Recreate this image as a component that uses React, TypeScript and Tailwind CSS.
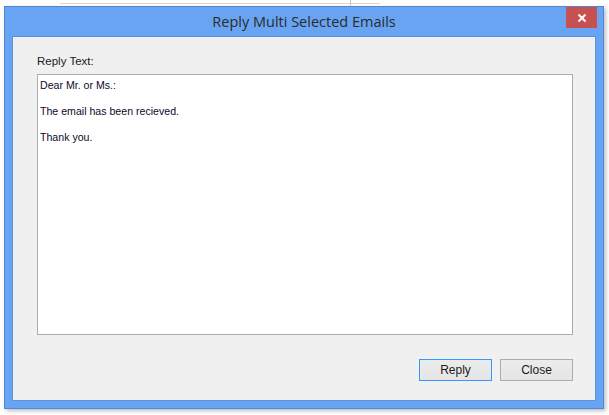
export default function App() {
  return (
    <div className="relative h-[415px] w-[609px] overflow-hidden bg-white font-['Liberation_Sans',Arial,sans-serif]">
      {/* faint app behind the dialog */}
      <div className="absolute left-[60px] top-0 h-[4px] w-[320px] border-b border-[#d8d8d8]" />
      <div className="absolute left-[350px] top-0 h-[6px] w-px bg-[#c8c8c8]" />

      <div className="pl-[4px] pt-[6px]">
        <div className="flex h-[403px] w-[600px] flex-col border border-[#4f88d4] bg-[#68a4f2] shadow-[2px_2px_4px_rgba(0,0,0,0.25)]">
          {/* title bar */}
          <div className="relative flex h-[29px] shrink-0 items-center justify-center pt-[1px]">
            <span className="font-['Open_Sans',sans-serif] text-[14.5px] text-[#2b2b2b]">
              Reply Multi Selected Emails
            </span>
            <button className="absolute right-[6px] top-0 flex h-[21px] w-[31px] items-center justify-center bg-[#c75050]">
              <svg width="10" height="10" viewBox="0 0 10 10">
                <path d="M1.5 1.5 L8.5 8.5 M8.5 1.5 L1.5 8.5" stroke="white" strokeWidth="2" />
              </svg>
            </button>
          </div>

          {/* client area */}
          <div className="mx-[7px] mb-[7px] flex flex-1 flex-col border border-[#5a92dc] bg-[#f0f0f0] pl-[24px] pr-[22px] pt-[17px]">
            <div className="text-[11.5px] leading-[15px] text-[#1a1a1a]">Reply Text:</div>
            <div className="mt-[5px] h-[261px] w-[536px] border border-[#abadb3] bg-white px-[2px] pt-[4px] text-[10.6px] leading-[13px] text-[#0a0a2a]">
              <div>Dear Mr. or Ms.:</div>
              <div className="h-[13px]" />
              <div>The email has been recieved.</div>
              <div className="h-[13px]" />
              <div>Thank you.</div>
            </div>
            <div className="mt-[24px] flex justify-end gap-[8px]">
              <button className="h-[22px] w-[73px] border border-[#3399ff] bg-[linear-gradient(#ececec,#e5e5e5)] text-[12px] text-[#1a1a1a]">
                Reply
              </button>
              <button className="h-[22px] w-[73px] border border-[#acacac] bg-[linear-gradient(#ececec,#e5e5e5)] text-[12px] text-[#1a1a1a]">
                Close
              </button>
            </div>
          </div>
        </div>
      </div>
    </div>
  );
}
